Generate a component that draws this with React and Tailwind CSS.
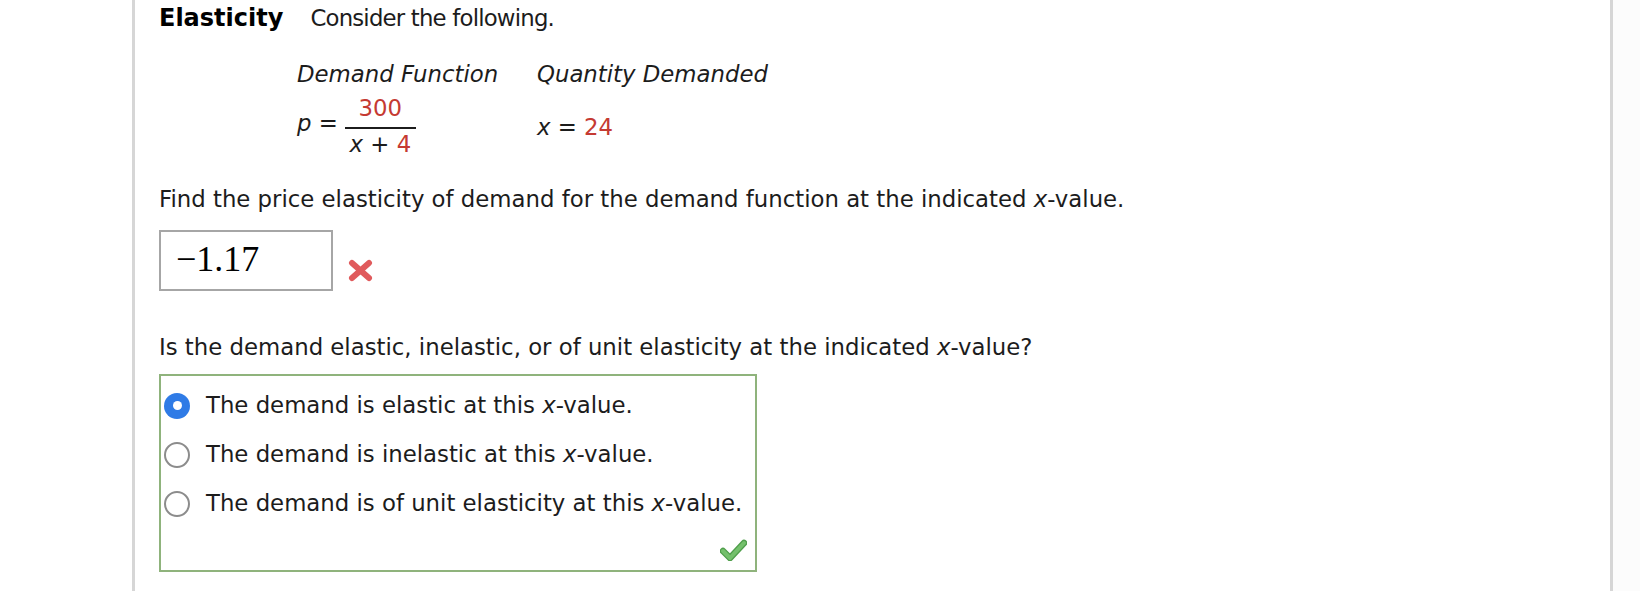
const RED = 'text-[#c53a32]'

function RadioDot({ checked }) {
  if (checked) {
    return (
      <span className="flex h-[26px] w-[26px] shrink-0 items-center justify-center rounded-full bg-[#2f7be6]">
        <span className="h-[9px] w-[9px] rounded-full bg-white" />
      </span>
    )
  }
  return <span className="h-[26px] w-[26px] shrink-0 rounded-full border-2 border-[#8c8c8c] bg-white" />
}

function Option({ checked, children }) {
  return (
    <div className="flex h-[49px] items-center pl-[3px]">
      <RadioDot checked={checked} />
      <span className="ml-[16px]">{children}</span>
    </div>
  )
}

function WrongMark() {
  return (
    <svg width="25" height="23" viewBox="0 0 25 23" className="mb-[9px] ml-[15px] self-end">
      <path d="M4 4 L21 19 M21 4 L4 19" stroke="#e05a5c" strokeWidth="6" strokeLinecap="round" />
    </svg>
  )
}

function RightMark() {
  return (
    <svg width="27" height="22" viewBox="0 0 27 22">
      <path d="M3 12 L10 19 L24 4" fill="none" stroke="#4f9e4b" strokeWidth="6.5" strokeLinecap="round" strokeLinejoin="round" />
      <path d="M3 12 L10 19 L24 4" fill="none" stroke="#74c06c" strokeWidth="4" strokeLinecap="round" strokeLinejoin="round" />
    </svg>
  )
}

export default function App() {
  return (
    <div className="flex h-[591px] w-full bg-[#fcfcfc] font-['DejaVu_Sans',Verdana,sans-serif] text-[22.8px] text-[#1c1c1c]">
      <div className="w-[132px] shrink-0 bg-white" />
      <div className="w-[1481px] shrink-0 border-x-[3px] border-[#d6d6d6] bg-white pl-[24px]">
        {/* heading */}
        <div className="flex h-[36px] items-baseline leading-[36px]">
          <span className="text-[24px] font-bold text-black">Elasticity</span>
          <span className="ml-[27px] tracking-[-0.8px]">Consider the following.</span>
        </div>

        {/* given values */}
        <div className="mt-[23px] pl-[138px]">
          <div className="flex h-[30px] items-center italic leading-[30px]">
            <span className="w-[240px]">Demand Function</span>
            <span>Quantity Demanded</span>
          </div>
          <div className="mt-[3px] flex h-[67px] items-center">
            <div className="flex w-[240px] items-center">
              <span className="mb-[4px]">
                <i>p</i> =
              </span>
              <div className="ml-[7px] flex w-[71px] flex-col items-center">
                <span className={`h-[26px] leading-[26px] ${RED}`}>300</span>
                <span className="mt-[6px] h-[2px] w-full bg-[#1c1c1c]" />
                <span className="mt-[2px] h-[26px] leading-[26px]">
                  <i>x</i> + <span className={RED}>4</span>
                </span>
              </div>
            </div>
            <span className="mt-[4px]">
              <i>x</i> = <span className={RED}>24</span>
            </span>
          </div>
        </div>

        <p className="mt-[25px] leading-[30px]">
          Find the price elasticity of demand for the demand function at the indicated <i>x</i>-value.
        </p>

        <div className="mt-[16px] flex">
          <div className="flex h-[61px] w-[174px] items-center border-2 border-[#a6a6a6] pl-[15px] pb-[4px] font-['Liberation_Serif','Times_New_Roman',serif] text-[36px] text-black">
            −1.17
          </div>
          <WrongMark />
        </div>

        <p className="mt-[41px] leading-[30px]">
          Is the demand elastic, inelastic, or of unit elasticity at the indicated <i>x</i>-value?
        </p>

        <div className="mt-[12px] flex h-[198px] w-[598px] flex-col border-2 border-[#8fb37c] pt-[5px]">
          <Option checked>
            The demand is elastic at this <i>x</i>-value.
          </Option>
          <Option>
            The demand is inelastic at this <i>x</i>-value.
          </Option>
          <Option>
            The demand is of unit elasticity at this <i>x</i>-value.
          </Option>
          <div className="mt-[11px] flex justify-end pr-[8px]">
            <RightMark />
          </div>
        </div>
      </div>
    </div>
  )
}
